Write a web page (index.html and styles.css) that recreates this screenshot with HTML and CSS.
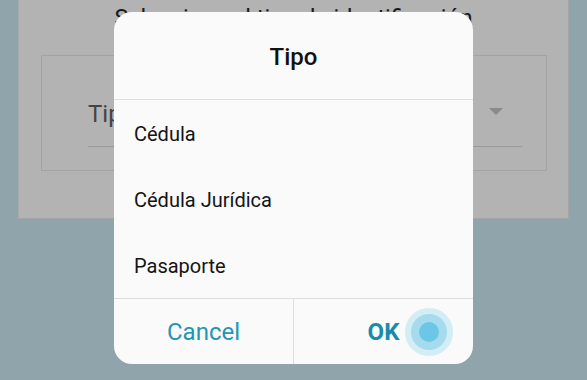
FILE: index.html
```html
<!DOCTYPE html>
<html lang="es">
<head>
<meta charset="utf-8">
<title>Tipo</title>
<link rel="stylesheet" href="styles.css">
</head>
<body>
<div class="screen">
  <div class="panel">
    <div class="panel-title">Seleccione el tipo de identificación</div>
    <div class="field-box">
      <div class="field">
        <span class="field-label">Tipo</span>
        <svg class="caret" width="14" height="7" viewBox="0 0 14 7"><path d="M0 0H14L7 7Z" fill="#8a8a8a"/></svg>
      </div>
    </div>
  </div>

  <div class="dialog">
    <div class="dialog-header">Tipo</div>
    <div class="dialog-list">
      <div class="dialog-item">Cédula</div>
      <div class="dialog-item">Cédula Jurídica</div>
      <div class="dialog-item">Pasaporte</div>
    </div>
    <div class="dialog-footer">
      <div class="btn btn-cancel">Cancel</div>
      <div class="btn btn-ok">OK<span class="ripple"></span></div>
    </div>
  </div>
</div>
</body>
</html>
```
FILE: styles.css
```css
html, body {
  margin: 0;
  padding: 0;
}
body {
  background: #90a4ab;
  font-family: Roboto, "Liberation Sans", Arial, sans-serif;
  width: 587px;
  height: 380px;
  overflow: hidden;
}
.screen {
  position: relative;
  width: 587px;
  height: 380px;
}
.panel {
  margin-left: 18px;
  width: 551px;
  height: 219px;
  background: #b3b3b3;
  border-left: 1px solid #a9a9a9;
  border-right: 1px solid #a4a4a4;
  border-bottom: 1px solid #a4a4a4;
  padding-top: 4px;
  box-sizing: border-box;
}
.panel-title {
  font-size: 23.3px;
  line-height: 28px;
  color: #1a1a1a;
  text-align: center;
  white-space: nowrap;
}
.field-box {
  margin: 23px 0 0 22px;
  width: 506px;
  height: 116px;
  box-sizing: border-box;
  border: 1px solid #a3a3a3;
  padding: 46px 24px 0 46px;
}
.field {
  display: flex;
  align-items: center;
  justify-content: space-between;
  border-bottom: 1px solid #9a9a9a;
  padding-bottom: 20px;
}
.field-label {
  font-size: 24px;
  line-height: 24px;
  color: #444;
  white-space: nowrap;
}
.caret {
  margin-right: 19px;
  margin-top: -5px;
}
.dialog {
  position: absolute;
  top: 12px;
  left: 114px;
  width: 359px;
  height: 352px;
  background: #fafafa;
  border-radius: 18px;
  overflow: hidden;
  display: flex;
  flex-direction: column;
}
.dialog-header {
  height: 88px;
  flex: none;
  border-bottom: 1px solid #dedede;
  display: flex;
  align-items: center;
  justify-content: center;
  font-size: 24px;
  font-weight: 500;
  color: #111;
  padding-top: 2px;
  box-sizing: border-box;
}
.dialog-list {
  flex: none;
}
.dialog-item {
  height: 66px;
  display: flex;
  align-items: center;
  padding-left: 20px;
  padding-top: 1px;
  box-sizing: border-box;
  font-size: 20px;
  color: #141414;
}
.dialog-footer {
  flex: 1;
  display: flex;
  border-top: 1px solid #dedede;
}
.btn {
  flex: 1;
  display: flex;
  align-items: center;
  justify-content: center;
  font-size: 24px;
  position: relative;
}
.btn-cancel {
  border-right: 1px solid #dedede;
  color: #2196b5;
}
.btn-ok {
  color: #1a8aa9;
  font-weight: 700;
}
.ripple {
  position: absolute;
  left: 125px;
  top: 23px;
  width: 20px;
  height: 20px;
  border-radius: 50%;
  background: #6cc6e5;
  box-shadow: 0 0 0 8px #a6dbee, 0 0 0 14px #d3edf5;
}
```
